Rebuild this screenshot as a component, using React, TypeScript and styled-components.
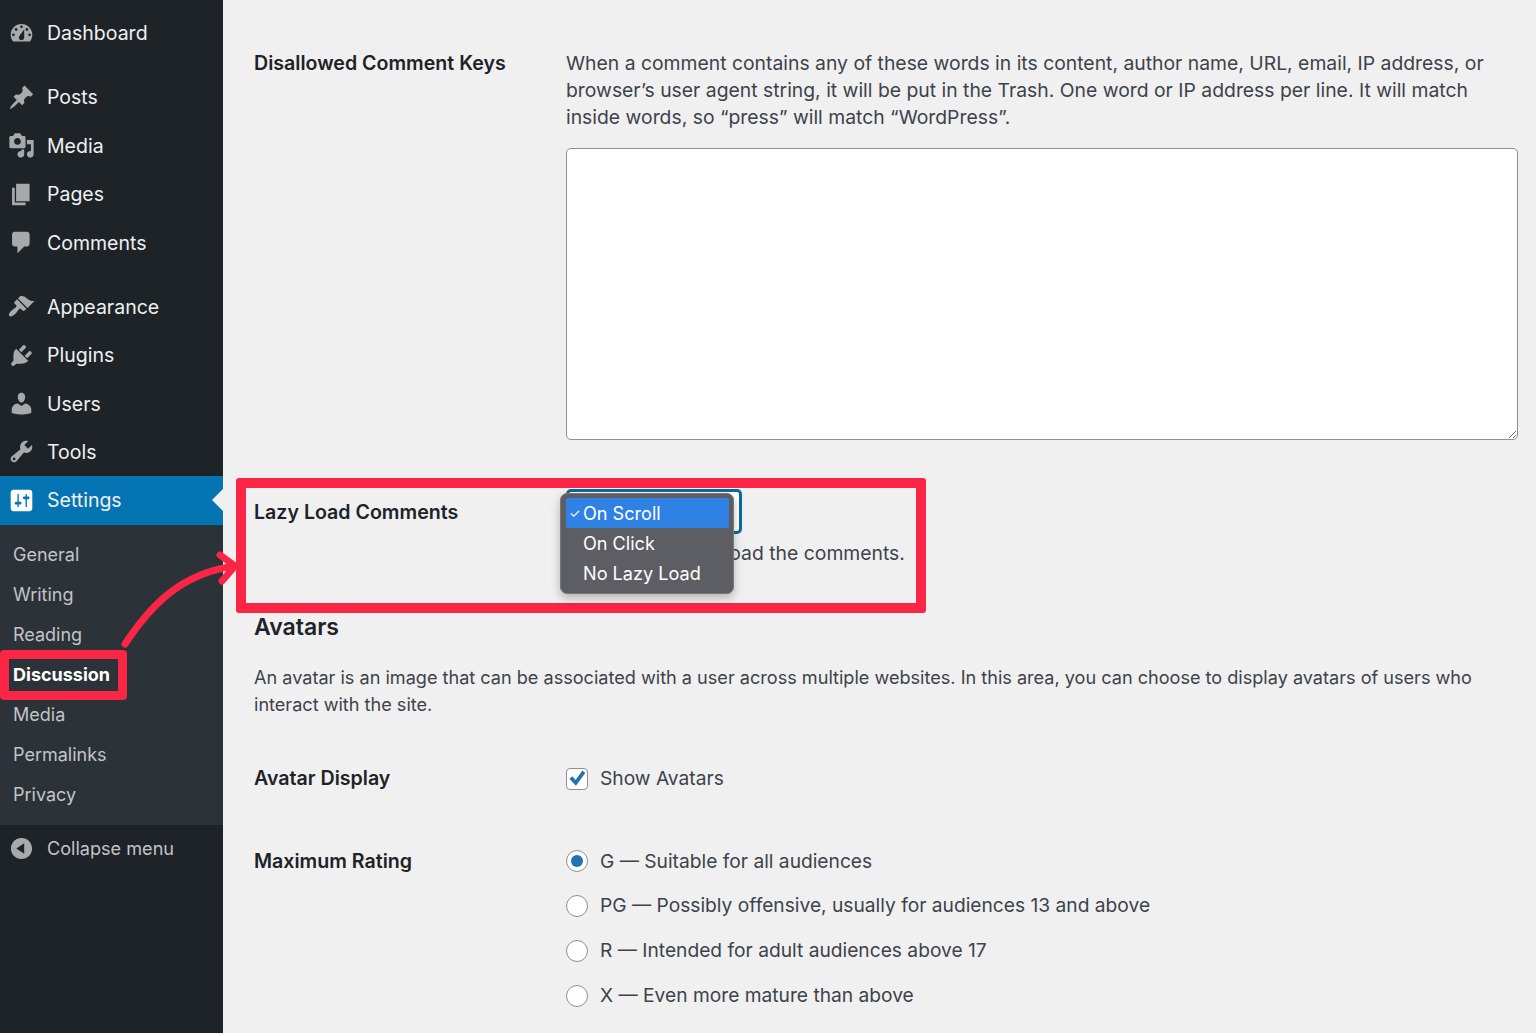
import React from "react";
import styled, { createGlobalStyle } from "styled-components";

const GlobalStyle = createGlobalStyle`
    html, body {
        margin: 0;
        padding: 0;
        background: #f0f0f1;
        overflow: hidden;
    }
    * {
        box-sizing: border-box;
    }
`;

const FONT = `Inter, "Noto Sans", "Liberation Sans", sans-serif`;
const RED = "#fb2546";

const Page = styled.div`
    position: relative;
    display: flex;
    width: 1536px;
    height: 1033px;
    overflow: hidden;
    font-family: ${FONT};
    background: #f0f0f1;
`;

const Sidebar = styled.nav`
    flex: 0 0 223px;
    padding-top: 9px;
    background: #1d2327;
`;

const MenuGroup = styled.div`
    margin-bottom: 15.8px;
`;

const MenuItem = styled.div<{ $active?: boolean }>`
    position: relative;
    display: flex;
    align-items: center;
    height: 48.4px;
    padding-left: 8px;
    gap: 12px;
    font-size: 19.5px;
    color: #f0f0f1;
    background: ${(p) => (p.$active ? "#0574b2" : "transparent")};
    svg {
        flex: 0 0 27px;
        width: 27px;
        height: 27px;
        fill: ${(p) => (p.$active ? "#fff" : "#a7aaad")};
    }
    ${(p) =>
        p.$active &&
        `&::after {
            content: "";
            position: absolute;
            right: 0;
            top: 13px;
            border: 11px solid transparent;
            border-left-width: 0;
            border-right-color: #f0f0f1;
        }`}
`;

const SubMenu = styled.div`
    padding: 10.4px 0 10.4px;
    background: #2c3338;
`;

const SubItem = styled.div<{ $current?: boolean }>`
    position: relative;
    display: flex;
    align-items: center;
    height: 40px;
    padding-left: 13px;
    font-size: 18px;
    font-weight: ${(p) => (p.$current ? 700 : 400)};
    color: ${(p) => (p.$current ? "#fff" : "#c3c4c7")};
`;

const DiscussionMark = styled.span`
    position: absolute;
    left: 0;
    top: -5px;
    width: 127px;
    height: 50px;
    border: 9px solid ${RED};
    border-radius: 4px;
`;

const CollapseRow = styled.div`
    display: flex;
    align-items: center;
    height: 46px;
    padding-left: 8px;
    gap: 12px;
    font-size: 18.1px;
    color: #c3c4c7;
    svg {
        width: 27px;
        height: 27px;
        fill: #a7aaad;
    }
`;

const Main = styled.main`
    flex: 1;
    padding: 50px 18px 0 31px;
    color: #3c434a;
    font-size: 19.35px;
    line-height: 27px;
`;

const Row = styled.div<{ $top?: number; $gap?: number }>`
    position: relative;
    display: grid;
    grid-template-columns: 312px 1fr;
    margin-top: ${(p) => p.$top ?? 0}px;
    margin-bottom: ${(p) => p.$gap ?? 0}px;
`;

const Label = styled.div`
    font-size: 19.6px;
    font-weight: 600;
    color: #1d2327;
`;

const Paragraph = styled.p`
    margin: 0;
`;

const SectionIntro = styled.p`
    margin: 0;
    font-size: 18.1px;
`;

const CommentKeys = styled.textarea`
    display: block;
    width: 100%;
    height: 292px;
    margin-top: 17px;
    background: #fff;
    border: 1.5px solid #8c8f94;
    border-radius: 5px;
    outline: none;
`;

const RedFrame = styled.div`
    position: absolute;
    left: -18px;
    top: -21px;
    width: 690px;
    height: 135px;
    border: 10px solid ${RED};
    border-radius: 3px;
`;

const SelectWrap = styled.div`
    position: relative;
    width: 176px;
    height: 45px;
    margin-top: -10px;
    background: #fff;
    border: 3px solid #0b6a99;
    border-radius: 5px;
`;

const Dropdown = styled.div`
    position: absolute;
    left: -9px;
    top: 1px;
    width: 174px;
    height: 101px;
    padding: 4px 4px 0 5px;
    background: #5d5e63;
    border: 1px solid #77787c;
    border-radius: 7px;
    box-shadow: 0 4px 10px rgba(0, 0, 0, 0.25);
`;

const Option = styled.div<{ $selected?: boolean }>`
    position: relative;
    height: 30px;
    padding-left: 17px;
    font-size: 18.1px;
    line-height: 30px;
    color: #fff;
    background: ${(p) => (p.$selected ? "#2f81e4" : "transparent")};
    border-radius: 2px;
`;

const Tick = styled.span`
    position: absolute;
    left: 3px;
    top: 0;
    font-size: 13px;
`;

const Description = styled.p`
    margin: 6.5px 0 0;
    white-space: nowrap;
`;

const Heading = styled.h2`
    margin: 44.5px 0 22.5px;
    font-size: 23px;
    font-weight: 600;
    line-height: 30px;
    color: #1d2327;
`;

const FieldRow = styled.label`
    display: flex;
    align-items: center;
    gap: 12px;
    height: 27px;
    font-size: 19.2px;
`;

const RadioList = styled.div`
    display: flex;
    flex-direction: column;
    gap: 17.9px;
`;

const CheckBox = styled.input`
    position: relative;
    appearance: none;
    flex: 0 0 22px;
    width: 22px;
    height: 22px;
    margin: 0;
    background: #fff;
    border: 1.5px solid #8c8f94;
    border-radius: 4px;
    &:checked::before {
        content: "";
        position: absolute;
        inset: 1px;
        background: #2271b1;
        clip-path: polygon(8% 52%, 24% 38%, 42% 58%, 80% 6%, 96% 20%, 44% 90%);
    }
`;

const Radio = styled.input`
    position: relative;
    appearance: none;
    flex: 0 0 22px;
    width: 22px;
    height: 22px;
    margin: 0;
    background: #fff;
    border: 1.5px solid #8c8f94;
    border-radius: 50%;
    &:checked::before {
        content: "";
        position: absolute;
        inset: 4px;
        background: #2271b1;
        border-radius: 50%;
    }
`;

const ArrowOverlay = styled.svg`
    position: absolute;
    left: 0;
    top: 0;
    width: 300px;
    height: 700px;
    pointer-events: none;
`;

const icons: Record<string, string> = {
    dashboard:
        "M3.76 16h12.48c1.1-1.37 1.76-3.11 1.76-5 0-4.42-3.58-8-8-8s-8 3.58-8 8c0 1.89.66 3.63 1.76 5zM10 4c.55 0 1 .45 1 1s-.45 1-1 1-1-.45-1-1 .45-1 1-1zM6 6c.55 0 1 .45 1 1s-.45 1-1 1-1-.45-1-1 .45-1 1-1zm8 0c.55 0 1 .45 1 1s-.45 1-1 1-1-.45-1-1 .45-1 1-1zm-5.37 5.55L12 7v6c0 1.1-.9 2-2 2s-2-.9-2-2c0-.57.24-1.08.63-1.45zM4 10c.55 0 1 .45 1 1s-.45 1-1 1-1-.45-1-1 .45-1 1-1zm12 0c.55 0 1 .45 1 1s-.45 1-1 1-1-.45-1-1 .45-1 1-1z",
    posts:
        "M10.44 3.02l1.82-1.82 6.36 6.35-1.83 1.82c-1.05-.68-2.48-.57-3.41.36l-.75.75c-.92.93-1.04 2.35-.35 3.41l-1.83 1.82-2.41-2.41-2.8 2.79c-.42.42-3.38 2.71-3.8 2.29s1.86-3.39 2.28-3.81l2.79-2.79L4.1 9.36l1.83-1.82c1.05.69 2.48.57 3.4-.36l.75-.75c.93-.92 1.05-2.35.36-3.41z",
    media:
        "M13 11V4c0-.55-.45-1-1-1h-1.67L9 1H5L3.67 3H2c-.55 0-1 .45-1 1v7c0 .55.45 1 1 1h10c.55 0 1-.45 1-1zM7 4.5c1.38 0 2.5 1.12 2.5 2.5S8.38 9.5 7 9.5 4.5 8.38 4.5 7 5.62 4.5 7 4.5zM14 6h5v10.5c0 1.38-1.12 2.5-2.5 2.5S14 17.88 14 16.5s1.12-2.5 2.5-2.5c.17 0 .34.02.5.05V9h-3V6zm-4 8.05V13h2v3.5c0 1.38-1.12 2.5-2.5 2.5S7 17.88 7 16.5 8.12 14 9.5 14c.17 0 .34.02.5.05z",
    pages: "M6 15V2h10v13H6zm-1 1h8v2H3V5h2v11z",
    comments:
        "M5 2h9c1.1 0 2 .9 2 2v7c0 1.1-.9 2-2 2h-2l-5 5v-5H5c-1.1 0-2-.9-2-2V4c0-1.1.9-2 2-2z",
    appearance:
        "M14.48 11.06L7.41 3.99l1.5-1.5c.5-.56 2.3-.47 3.51.32 1.21.8 1.43 1.28 2.91 2.1 1.18.64 2.45 1.26 4.45.85zm-.71.71L6.7 4.7 4.93 6.47c-.39.39-.39 1.02 0 1.41l1.06 1.06c.39.39.39 1.03 0 1.42-.6.6-1.43 1.11-2.21 1.69-.35.26-.7.53-1.01.84C1.43 13.71 0 16.06 1 17c.95 1.02 3.29-.43 4.72-1.86.31-.31.58-.66.85-1.01.58-.78 1.09-1.61 1.69-2.21.39-.39 1.02-.39 1.41 0l1.06 1.06c.39.39 1.02.39 1.41 0z",
    plugins:
        "M13.11 4.36L9.87 7.6 8 5.73l3.24-3.24c.35-.34 1.05-.2 1.56.32.52.51.66 1.21.31 1.55zm-8 1.77l.91-1.12 9.01 9.01-1.19.84c-.71.71-2.63 1.16-3.82 1.16H6.14L4.9 17.26c-.59.59-1.54.59-2.12 0-.59-.58-.59-1.53 0-2.12l1.24-1.24v-3.88c0-1.13.4-3.19 1.09-3.89zm7.26 3.97l3.24-3.24c.34-.35 1.04-.21 1.55.31.52.51.66 1.21.31 1.55l-3.24 3.25z",
    users:
        "M10 9.25c-2.27 0-2.73-3.44-2.73-3.44C7 4.02 7.82 2 9.97 2c2.16 0 2.98 2.02 2.71 3.81 0 0-.41 3.44-2.68 3.44zm0 2.57L12.72 10c2.39 0 4.52 2.33 4.52 4.53v2.49s-3.65 1.13-7.24 1.13c-3.65 0-7.24-1.13-7.24-1.13v-2.49c0-2.25 1.94-4.48 4.47-4.48z",
    tools:
        "M16.68 9.77c-1.34 1.34-3.3 1.67-4.95.99l-5.41 6.52c-.99.99-2.59.99-3.58 0s-.99-2.59 0-3.57l6.52-5.42c-.68-1.65-.35-3.61.99-4.95 1.28-1.28 3.12-1.62 4.72-1.06l-2.89 2.89 2.82 2.82 2.86-2.87c.53 1.58.18 3.39-1.08 4.65zM3.81 16.21c.4.39 1.04.39 1.43 0 .4-.4.4-1.04 0-1.43-.39-.4-1.03-.4-1.43 0-.39.39-.39 1.03 0 1.43z",
    settings:
        "M18 16V4c0-1.1-.9-2-2-2H4c-1.1 0-2 .9-2 2v12c0 1.1.9 2 2 2h12c1.1 0 2-.9 2-2zM8 11h1c.55 0 1 .45 1 1s-.45 1-1 1H8v1.5c0 .28-.22.5-.5.5s-.5-.22-.5-.5V13H6c-.55 0-1-.45-1-1s.45-1 1-1h1V5.5c0-.28.22-.5.5-.5s.5.22.5.5V11zm5-2h-1c-.55 0-1-.45-1-1s.45-1 1-1h1V5.5c0-.28.22-.5.5-.5s.5.22.5.5V7h1c.55 0 1 .45 1 1s-.45 1-1 1h-1v5.5c0 .28-.22.5-.5.5s-.5-.22-.5-.5V9z",
    collapse:
        "M10 2.16c4.33 0 7.84 3.51 7.84 7.84s-3.51 7.84-7.84 7.84S2.16 14.33 2.16 10 5.71 2.16 10 2.16zm2 11.72V6.12L6.18 9.97z",
};

const Icon = ({ name }: { name: string }) => (
    <svg viewBox="0 0 20 20" fillRule="evenodd" aria-hidden="true">
        <path d={icons[name]} />
    </svg>
);

const Item = ({ icon, label, active }: { icon: string; label: string; active?: boolean }) => (
    <MenuItem $active={active}>
        <Icon name={icon} />
        {label}
    </MenuItem>
);

const ratings = [
    "G — Suitable for all audiences",
    "PG — Possibly offensive, usually for audiences 13 and above",
    "R — Intended for adult audiences above 17",
    "X — Even more mature than above",
];

const App = () => {
    return (
        <Page>
            <GlobalStyle />
            <Sidebar>
                <MenuGroup>
                    <Item icon="dashboard" label="Dashboard" />
                </MenuGroup>
                <MenuGroup>
                    <Item icon="posts" label="Posts" />
                    <Item icon="media" label="Media" />
                    <Item icon="pages" label="Pages" />
                    <Item icon="comments" label="Comments" />
                </MenuGroup>
                <Item icon="appearance" label="Appearance" />
                <Item icon="plugins" label="Plugins" />
                <Item icon="users" label="Users" />
                <Item icon="tools" label="Tools" />
                <Item icon="settings" label="Settings" active />
                <SubMenu>
                    <SubItem>General</SubItem>
                    <SubItem>Writing</SubItem>
                    <SubItem>Reading</SubItem>
                    <SubItem $current>
                        <DiscussionMark />
                        Discussion
                    </SubItem>
                    <SubItem>Media</SubItem>
                    <SubItem>Permalinks</SubItem>
                    <SubItem>Privacy</SubItem>
                </SubMenu>
                <CollapseRow>
                    <Icon name="collapse" />
                    Collapse menu
                </CollapseRow>
            </Sidebar>

            <Main>
                <Row $gap={58.5}>
                    <Label>Disallowed Comment Keys</Label>
                    <div>
                        <Paragraph>
                            When a comment contains any of these words in its content, author name, URL, email, IP address, or
                            browser’s user agent string, it will be put in the Trash. One word or IP address per line. It will match
                            inside words, so “press” will match “WordPress”.
                        </Paragraph>
                        <CommentKeys />
                    </div>
                </Row>

                <Row>
                    <RedFrame />
                    <Label>Lazy Load Comments</Label>
                    <div>
                        <SelectWrap>
                            <Dropdown>
                                <Option $selected>
                                    <Tick>✓</Tick>
                                    On Scroll
                                </Option>
                                <Option>On Click</Option>
                                <Option>No Lazy Load</Option>
                            </Dropdown>
                        </SelectWrap>
                        <Description>Choose how you load the comments.</Description>
                    </div>
                </Row>

                <Heading>Avatars</Heading>
                <SectionIntro>
                    An avatar is an image that can be associated with a user across multiple websites. In this area, you can choose to display avatars of users who
                    interact with the site.
                </SectionIntro>

                <Row $top={47} $gap={55.5}>
                    <Label>Avatar Display</Label>
                    <FieldRow>
                        <CheckBox type="checkbox" defaultChecked />
                        Show Avatars
                    </FieldRow>
                </Row>

                <Row>
                    <Label>Maximum Rating</Label>
                    <RadioList>
                        {ratings.map((text, i) => (
                            <FieldRow key={text}>
                                <Radio type="radio" name="rating" defaultChecked={i === 0} />
                                {text}
                            </FieldRow>
                        ))}
                    </RadioList>
                </Row>
            </Main>

            <ArrowOverlay viewBox="0 0 300 700">
                <path
                    d="M125 644C150 606 180 574 234 566M220 555L235 566L222 581"
                    fill="none"
                    stroke={RED}
                    strokeWidth="7"
                    strokeLinecap="round"
                    strokeLinejoin="round"
                />
            </ArrowOverlay>
        </Page>
    );
};

export default App;
